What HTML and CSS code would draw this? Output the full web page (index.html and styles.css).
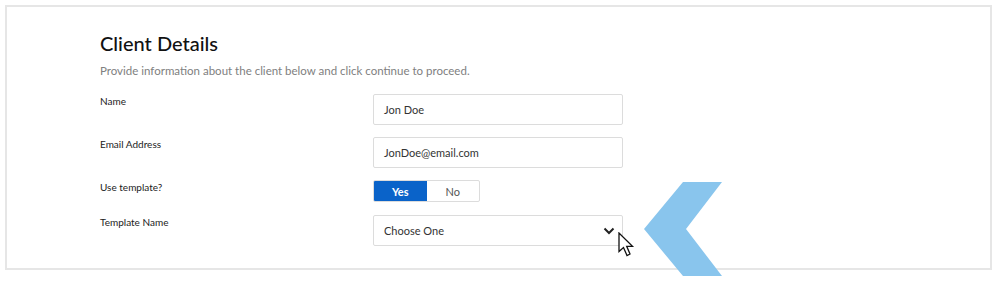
FILE: index.html
```html
<!DOCTYPE html>
<html>
<head>
<meta charset="utf-8">
<link rel="stylesheet" href="styles.css">
</head>
<body>
<div class="card">
  <div class="content">
    <h1 class="title">Client Details</h1>
    <p class="subtitle">Provide information about the client below and click continue to proceed.</p>
    <div class="row">
      <div class="label">Name</div>
      <div class="field input">Jon Doe</div>
    </div>
    <div class="row">
      <div class="label">Email Address</div>
      <div class="field input">JonDoe@email.com</div>
    </div>
    <div class="row">
      <div class="label">Use template?</div>
      <div class="toggle">
        <span class="opt on">Yes</span>
        <span class="opt">No</span>
      </div>
    </div>
    <div class="row row-last">
      <div class="label">Template Name</div>
      <div class="field input select">
        <span>Choose One</span>
        <svg class="caret" width="12" height="8" viewBox="0 0 12 8"><path d="M1.5 1.5 L6 6 L10.5 1.5" fill="none" stroke="#222" stroke-width="2"/></svg>
      </div>
    </div>
  </div>
</div>
<svg class="cursor" width="20" height="27" viewBox="0 0 20 27">
  <path d="M1 1 L1 19.5 L5.5 15.5 L9 23.5 L12 22 L8.7 14.3 L14.5 14.3 Z" fill="#fff" stroke="#111" stroke-width="1.3" stroke-linejoin="miter"/>
</svg>
<svg class="chevron" width="80" height="96" viewBox="0 0 80 96">
  <polygon points="39,0 78,0 42,47 78,94 39,94 0,47" fill="#89c5ed"/>
</svg>
</body>
</html>
```
FILE: styles.css
```css
html, body {
  margin: 0;
  padding: 0;
  background: #fff;
}
body {
  width: 1000px;
  height: 281px;
  position: relative;
  overflow: hidden;
  font-family: "Lato", "Open Sans", sans-serif;
  color: #222;
}
.card {
  position: relative;
  margin: 5px 0 0 5px;
  width: 983px;
  height: 261px;
  border: 2px solid #e6e6e6;
  box-sizing: content-box;
}
.content {
  padding: 25px 0 0 93px;
}
.title {
  margin: 0;
  font-size: 20px;
  line-height: 23px;
  font-weight: 500;
  color: #111;
}
.subtitle {
  margin: 9px 0 0;
  font-size: 11.5px;
  line-height: 14px;
  color: #808080;
}
.row {
  display: flex;
  align-items: flex-start;
  margin-top: 12px;
}
.subtitle + .row { margin-top: 16px; }
.row-last { margin-top: 13px; }
.label {
  width: 273px;
  font-size: 10px;
  line-height: 14px;
  color: #222;
}
.field {
  width: 250px;
  height: 31px;
  box-sizing: border-box;
  border: 1px solid #dcdcdc;
  border-radius: 2px;
  padding: 0 10px;
  display: flex;
  align-items: center;
  font-size: 11px;
  color: #333;
}
.select {
  justify-content: space-between;
  padding-right: 7px;
}
.caret { display: block; }
.toggle {
  display: flex;
  width: 107px;
  height: 22px;
  border: 1px solid #dcdcdc;
  border-radius: 2px;
  box-sizing: border-box;
  overflow: hidden;
}
.opt {
  flex: 1;
  display: flex;
  align-items: center;
  justify-content: center;
  font-size: 11px;
  color: #555;
}
.opt.on {
  background: #0a63c9;
  color: #fff;
  font-weight: 700;
}
.cursor {
  position: absolute;
  left: 618px;
  top: 232px;
}
.chevron {
  position: absolute;
  left: 644px;
  top: 182px;
}
```
